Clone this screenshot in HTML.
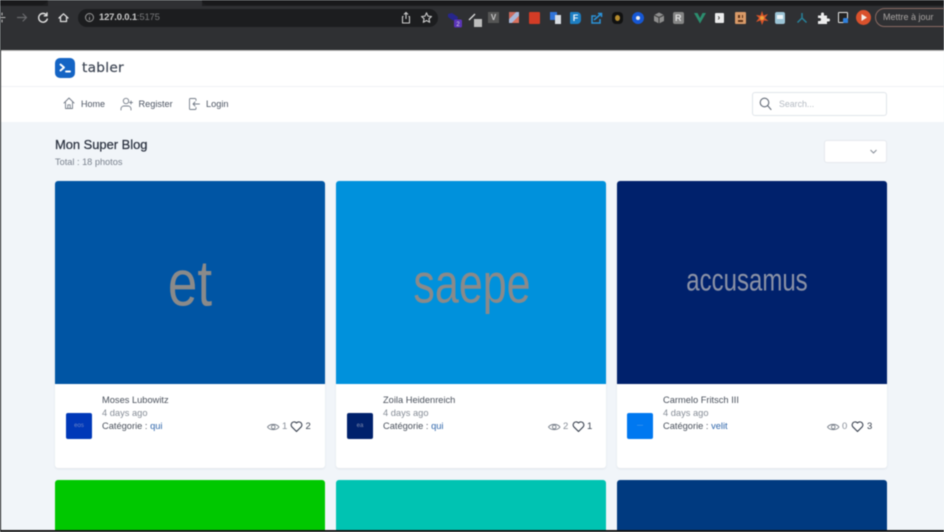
<!DOCTYPE html>
<html lang="fr"><head><meta charset="utf-8"><title>tabler</title>
<style>
*{box-sizing:border-box;margin:0;padding:0}
html,body{width:944px;height:532px;overflow:hidden;background:#f1f5f9}
body{position:relative;font-family:"Liberation Sans",sans-serif;color:#3a4250;filter:blur(.5px)}
.a{position:absolute}
.t{position:absolute;white-space:nowrap;line-height:1}
svg{position:absolute;overflow:visible}
.card{position:absolute;background:#fff;border-radius:3px;box-shadow:0 1px 2px rgba(30,40,60,.08)}
.img{position:absolute;border-radius:3px 3px 0 0}
.big{position:absolute;color:#8a8a8a;white-space:nowrap;line-height:1;text-align:center;transform-origin:50% 0}
.ic{position:absolute;border-radius:2px}
</style></head><body>
<!-- browser chrome -->
<div class="a" style="left:0;top:0;width:944px;height:50px;background:#2f3033"></div>
<div class="a" style="left:0;top:0;width:944px;height:6px;background:#1e1f21"></div>
<div class="a" style="left:0;top:0;width:47px;height:5px;background:#19191b;border-radius:0 0 5px 0"></div>
<div class="a" style="left:202px;top:0;width:742px;height:5px;background:#19191b;border-radius:0 0 0 5px"></div>
<div class="a" style="left:48px;top:0;width:154px;height:6px;background:#2f3033"></div>
<div class="a" style="left:78px;top:9px;width:360px;height:18px;border-radius:9px;background:#1c1d1f"></div>
<svg style="left:0;top:9px" width="80" height="18" fill="none" stroke-linecap="round" stroke-linejoin="round">
<path d="M1 8.500H5M2 6V4M2 11V13" stroke="#bbb" stroke-width="1.100"/>
<path d="M17.500 8.500H26.500M23 5L26.500 8.500L23 12" stroke="#6a6b6e" stroke-width="1.200"/>
<path d="M46.500 6A4.400 4.400 0 1 0 47.300 10M47 4V6.800H44.300" stroke="#ddd" stroke-width="1.400"/>
<path d="M59 9L63.500 4.800L68 9M60.500 8V12.500H66.500V8" stroke="#ddd" stroke-width="1.300"/>
</svg>
<svg style="left:84px;top:11px" width="14" height="14" fill="none"><circle cx="5.500" cy="6.500" r="4" stroke="#999" stroke-width="1"/><path d="M5.500 6V9M5.500 4.200V4.800" stroke="#999"/></svg>
<div class="t" style="left:99px;top:12.500px;font-size:9.500px;color:#c8c8c8;font-weight:bold;letter-spacing:-.02em">127.0.0.1<span style="color:#77787a;font-weight:normal">:5175</span></div>
<svg style="left:400px;top:10px" width="36" height="16" fill="none" stroke="#ccc" stroke-width="1.100" stroke-linejoin="round">
<path d="M3.500 6.500H2.500V13H9.500V6.500H8.500M6 9V2.500M4 4.500L6 2.500L8 4.500"/>
<path d="M26.500 2.800L28 6.200L31.500 6.500L28.900 8.800L29.700 12.300L26.500 10.500L23.300 12.300L24.100 8.800L21.500 6.500L25 6.200Z"/>
</svg>
<!-- extensions -->
<svg style="left:446px;top:11px" width="20" height="18"><path d="M2 3L6 2L12 6L11 10L6 9L2 6Z" fill="#27268c"/><rect x="8" y="8.500" width="8" height="8" rx="1.500" fill="#5b34b8"/><text x="12" y="15" font-size="6" fill="#ddd" text-anchor="middle" font-family="Liberation Sans">2</text></svg>
<svg style="left:468px;top:11px" width="16" height="18"><path d="M1 9L7 3" stroke="#ddd" stroke-width="1.300"/><rect x="6" y="8" width="8" height="8" fill="#bdbdbd"/></svg>
<div class="a" style="left:488px;top:12px;width:11px;height:11px;background:#555;color:#c9c9c9;font-size:8px;font-weight:bold;text-align:center;line-height:11px">V</div>
<div class="a" style="left:509px;top:12px;width:10px;height:11px;background:linear-gradient(135deg,#c96a5e 0 35%,#a9b7d8 35% 65%,#d9705e 65%)"></div>
<div class="a" style="left:529px;top:12px;width:11px;height:12px;background:#d33c26;border-radius:1px"></div>
<div class="a" style="left:550px;top:12px;width:7px;height:8px;background:#3174d8"></div>
<div class="a" style="left:555px;top:15px;width:6px;height:9px;background:#d8dde3"></div>
<div class="a" style="left:570px;top:12px;width:11px;height:12px;background:#1d7ec2;color:#e8f2f8;font-size:9px;font-weight:bold;line-height:12px;text-align:center;border-radius:1px 4px 4px 1px">F</div>
<svg style="left:590px;top:12px" width="14" height="13" fill="none" stroke="#2b92d8" stroke-width="1.500"><path d="M10 7V11H2V4H6"/><path d="M4 8L11 2M8 1.500H11.500V5"/></svg>
<div class="a" style="left:612px;top:12px;width:11px;height:12px;border-radius:4px;background:#111"></div>
<div class="a" style="left:615px;top:15px;width:5px;height:6px;border-radius:50%;background:#b58b2d"></div>
<div class="a" style="left:632px;top:12px;width:12px;height:12px;border-radius:50%;background:#1657d4"></div>
<div class="a" style="left:636px;top:16px;width:4px;height:4px;border-radius:50%;background:#eee"></div>
<svg style="left:652px;top:11px" width="14" height="14"><path d="M7 1.500L12 4V10L7 12.500L2 10V4Z" fill="#8d8d8d"/><path d="M2 4L7 6.500L12 4M7 6.500V12.500" stroke="#3a3a3a" fill="none"/></svg>
<div class="a" style="left:673px;top:12px;width:11px;height:12px;background:#858585;border-radius:2px"></div>
<div class="t" style="left:675px;top:13.500px;font-size:9px;color:#ddd;font-weight:bold">R</div>
<svg style="left:693px;top:12px" width="14" height="12"><path d="M1 1H4.500L7 6L9.500 1H13L7 11.500Z" fill="#2c8d6e"/></svg>
<div class="a" style="left:715px;top:13px;width:9px;height:10px;background:#ececec;border-radius:1px"></div>
<div class="t" style="left:717.500px;top:14px;font-size:8px;font-weight:bold;color:#333">›</div>
<div class="a" style="left:735px;top:12px;width:11px;height:12px;background:#d99a68;border-radius:1px"></div>
<div class="a" style="left:738px;top:15px;width:1.500px;height:3px;background:#5b3218"></div>
<div class="a" style="left:741.500px;top:15px;width:1.500px;height:3px;background:#5b3218"></div>
<div class="a" style="left:738px;top:20px;width:5px;height:1.500px;background:#5b3218"></div>
<svg style="left:755px;top:11px" width="14" height="14"><path d="M7 0L8.500 4.500L13 3L10 7L13.500 10L9 9.500L7 14L5.500 9.500L1 11L4 7L1 4L5.500 4.500Z" fill="#d9552a"/><circle cx="7" cy="7" r="2" fill="#efa43a"/></svg>
<div class="a" style="left:775px;top:12px;width:10px;height:12px;background:#9cc4d6;border-radius:2px"></div>
<div class="a" style="left:777px;top:15px;width:6px;height:4px;background:#eef5f8"></div>
<svg style="left:796px;top:12px" width="12" height="12" fill="none" stroke="#27819a" stroke-width="1.500"><path d="M6 1V6M6 6L1.500 10.500M6 6L10.500 10.500"/></svg>
<svg style="left:816px;top:11px" width="14" height="14"><path d="M2 4.500H5V3A1.500 1.500 0 0 1 8 3V4.500H11V7.500H12.500A1.500 1.500 0 0 1 12.500 10.500H11V13H2V10H3.500A1.500 1.500 0 0 0 3.500 7H2Z" fill="#ececec"/></svg>
<div class="a" style="left:838px;top:12px;width:10px;height:11px;border:1.500px solid #e3e3e3;border-radius:1px;background:#222"></div>
<div class="a" style="left:843px;top:18px;width:5px;height:5px;background:#2f80dc;border-radius:1px"></div>
<div class="a" style="left:856px;top:10px;width:15px;height:15px;border-radius:50%;background:#d9512c"></div>
<svg style="left:856px;top:10px" width="15" height="15"><path d="M5.500 4L11 7.500L5.500 11Z" fill="#f4efe9"/></svg>
<div class="a" style="left:875px;top:8px;width:80px;height:19px;border-radius:10px;border:1px solid #8a6a63"></div>
<div class="t" style="left:883px;top:13px;font-size:9px;color:#a8a4a2">Mettre à jour</div>
<!-- header -->
<div class="a" style="left:1px;top:50px;width:943px;height:36px;background:#fff;border-top:1px solid #bbb"></div>
<div class="a" style="left:1px;top:86px;width:943px;height:36px;background:#fff;border-top:1px solid #eff2f5"></div>
<div class="a" style="left:55px;top:58px;width:20px;height:20px;border-radius:5px;background:#1464c4"></div>
<svg style="left:55px;top:58px" width="20" height="20" fill="none" stroke="#fff" stroke-width="1.900" stroke-linecap="round" stroke-linejoin="round"><path d="M5.500 6.500L9 9.500L5.500 12.500M11 13.500H15"/></svg>
<div class="t" style="left:82px;top:61.500px;color:#3e4654;letter-spacing:.02em;font-family:'DejaVu Sans',sans-serif;font-size:13.700px;-webkit-text-stroke:.2px #3e4654">tabler</div>
<svg style="left:63px;top:96px" width="170" height="15" fill="none" stroke="#767e8a" stroke-width=".9" stroke-linecap="round" stroke-linejoin="round">
<path d="M1 7L6 2L11 7M2.500 6V12.500H9.500V6M4.800 12.500V8.800H7.200V12.500"/>
<circle cx="63" cy="5" r="2.700"/><path d="M58 14V12.500A3 3 0 0 1 61 10H65A3 3 0 0 1 68 12.500V14M66.500 6.500H69.500M68 5V8"/>
<path d="M133 4.500V3.500A1 1 0 0 0 132 2.500H127.500A1 1 0 0 0 126.500 3.500V12.500A1 1 0 0 0 127.500 13.500H132A1 1 0 0 0 133 12.500V11.500M130 8H136.500M130 8L132 6M130 8L132 10"/>
</svg>
<div class="t" style="left:81px;top:100px;font-size:9px;color:#4d5563">Home</div>
<div class="t" style="left:138.500px;top:100px;font-size:9.200px;color:#4d5563">Register</div>
<div class="t" style="left:206px;top:100px;font-size:9.200px;color:#4d5563">Login</div>
<div class="a" style="left:752px;top:92px;width:135px;height:24px;border:1px solid #e1e5ea;border-radius:3px;background:#fff"></div>
<svg style="left:759px;top:97px" width="14" height="14" fill="none" stroke="#636b77" stroke-width="1.100" stroke-linecap="round"><circle cx="5.500" cy="5.500" r="4.300"/><path d="M8.800 8.800L12 12.500"/></svg>
<div class="t" style="left:779px;top:100px;font-size:8.800px;color:#b4bac2">Search...</div>
<!-- page head -->
<div class="t" style="left:55px;top:138.500px;font-size:12.900px;color:#2b3240;-webkit-text-stroke:.25px #2b3240">Mon Super Blog</div>
<div class="t" style="left:55px;top:157.500px;font-size:9.200px;color:#7a828e">Total : 18 photos</div>
<div class="a" style="left:824px;top:140px;width:63px;height:23px;background:#fff;border:1px solid #e6e9ee;border-radius:3px"></div>
<svg style="left:869px;top:148px" width="10" height="8" fill="none" stroke="#8a919b" stroke-width="1.100"><path d="M1.500 2L4.500 5L7.500 2"/></svg>
<!-- cards -->
<div class="card" style="left:55px;top:181px;width:270px;height:287px"></div>
<div class="card" style="left:336px;top:181px;width:270px;height:287px"></div>
<div class="card" style="left:617px;top:181px;width:270px;height:287px"></div>
<div class="img" style="left:55px;top:181px;width:270px;height:203px;background:#0055a4"></div>
<div class="img" style="left:336px;top:181px;width:270px;height:203px;background:#0091dc"></div>
<div class="img" style="left:617px;top:181px;width:270px;height:203px;background:#00216c"></div>
<div class="big" style="left:55px;top:252px;width:270px;font-size:53px;transform:scaleY(1.22)">et</div>
<div class="big" style="left:337px;top:256.500px;width:270px;font-size:43px;transform:scaleY(1.3)">saepe</div>
<div class="big" style="left:612px;top:265px;width:270px;font-size:24px;transform:scaleY(1.33);color:#8b92a6">accusamus</div>
<div class="ic" style="left:66px;top:413px;width:26px;height:26px;background:#0038b8;color:#6d86c8;font-size:6px;line-height:26px;text-align:center">eos</div>
<div class="ic" style="left:347px;top:413px;width:26px;height:26px;background:#00216c;color:#7f8cae;font-size:6px;line-height:26px;text-align:center">ea</div>
<div class="ic" style="left:627px;top:413px;width:26px;height:26px;background:#0078f0;color:#5ea6ec;font-size:6px;line-height:26px;text-align:center">—</div>
<div class="t" style="left:102px;top:396px;font-size:9.300px;color:#4a515c">Moses Lubowitz</div>
<div class="t" style="left:102px;top:409px;font-size:9.300px;color:#868d97">4 days ago</div>
<div class="t" style="left:102px;top:422px;font-size:9.300px;color:#4a515c">Catégorie : <span style="color:#2f66ab">qui</span></div>
<div class="t" style="left:383px;top:396px;font-size:9.300px;color:#4a515c">Zoila Heidenreich</div>
<div class="t" style="left:383px;top:409px;font-size:9.300px;color:#868d97">4 days ago</div>
<div class="t" style="left:383px;top:422px;font-size:9.300px;color:#4a515c">Catégorie : <span style="color:#2f66ab">qui</span></div>
<div class="t" style="left:663px;top:396px;font-size:9.300px;color:#4a515c">Carmelo Fritsch III</div>
<div class="t" style="left:663px;top:409px;font-size:9.300px;color:#868d97">4 days ago</div>
<div class="t" style="left:663px;top:422px;font-size:9.300px;color:#4a515c">Catégorie : <span style="color:#2f66ab">velit</span></div>
<!-- stats -->
<svg style="left:267px;top:420px" width="50" height="14" fill="none" stroke-linejoin="round">
<path d="M.5 7C3 3.500 9.500 3.500 12 7C9.500 10.500 3 10.500 .5 7Z" stroke="#767d88" stroke-width=".9"/><circle cx="6.250" cy="7" r="1.800" stroke="#767d88" stroke-width=".9"/>
<path d="M29.500 11.500L24.800 6.800A3 3 0 0 1 29.500 3A3 3 0 0 1 34.200 6.800Z" stroke="#3a4250" stroke-width="1.100"/></svg>
<svg style="left:548px;top:420px" width="50" height="14" fill="none" stroke-linejoin="round">
<path d="M.5 7C3 3.500 9.500 3.500 12 7C9.500 10.500 3 10.500 .5 7Z" stroke="#767d88" stroke-width=".9"/><circle cx="6.250" cy="7" r="1.800" stroke="#767d88" stroke-width=".9"/>
<path d="M30.500 11.500L25.800 6.800A3 3 0 0 1 30.500 3A3 3 0 0 1 35.200 6.800Z" stroke="#3a4250" stroke-width="1.100"/></svg>
<svg style="left:827px;top:420px" width="50" height="14" fill="none" stroke-linejoin="round">
<path d="M.5 7C3 3.500 9.500 3.500 12 7C9.500 10.500 3 10.500 .5 7Z" stroke="#767d88" stroke-width=".9"/><circle cx="6.250" cy="7" r="1.800" stroke="#767d88" stroke-width=".9"/>
<path d="M30.500 11.500L25.800 6.800A3 3 0 0 1 30.500 3A3 3 0 0 1 35.200 6.800Z" stroke="#3a4250" stroke-width="1.100"/></svg>
<div class="t" style="left:282px;top:422px;font-size:9.500px;color:#868d97">1</div>
<div class="t" style="left:305.500px;top:422px;font-size:9.500px;color:#3a4250">2</div>
<div class="t" style="left:563px;top:422px;font-size:9.500px;color:#868d97">2</div>
<div class="t" style="left:587px;top:422px;font-size:9.500px;color:#3a4250">1</div>
<div class="t" style="left:842px;top:422px;font-size:9.500px;color:#868d97">0</div>
<div class="t" style="left:867px;top:422px;font-size:9.500px;color:#3a4250">3</div>
<!-- second row -->
<div class="img" style="left:55px;top:480px;width:270px;height:52px;background:#00c800"></div>
<div class="img" style="left:336px;top:480px;width:270px;height:52px;background:#00c3b2"></div>
<div class="img" style="left:617px;top:480px;width:270px;height:52px;background:#003a80"></div>
<!-- frame -->
<div class="a" style="left:0;top:530px;width:944px;height:2px;background:#111"></div>
<div class="a" style="left:0;top:50px;width:1px;height:482px;background:#111"></div>
</body></html>
